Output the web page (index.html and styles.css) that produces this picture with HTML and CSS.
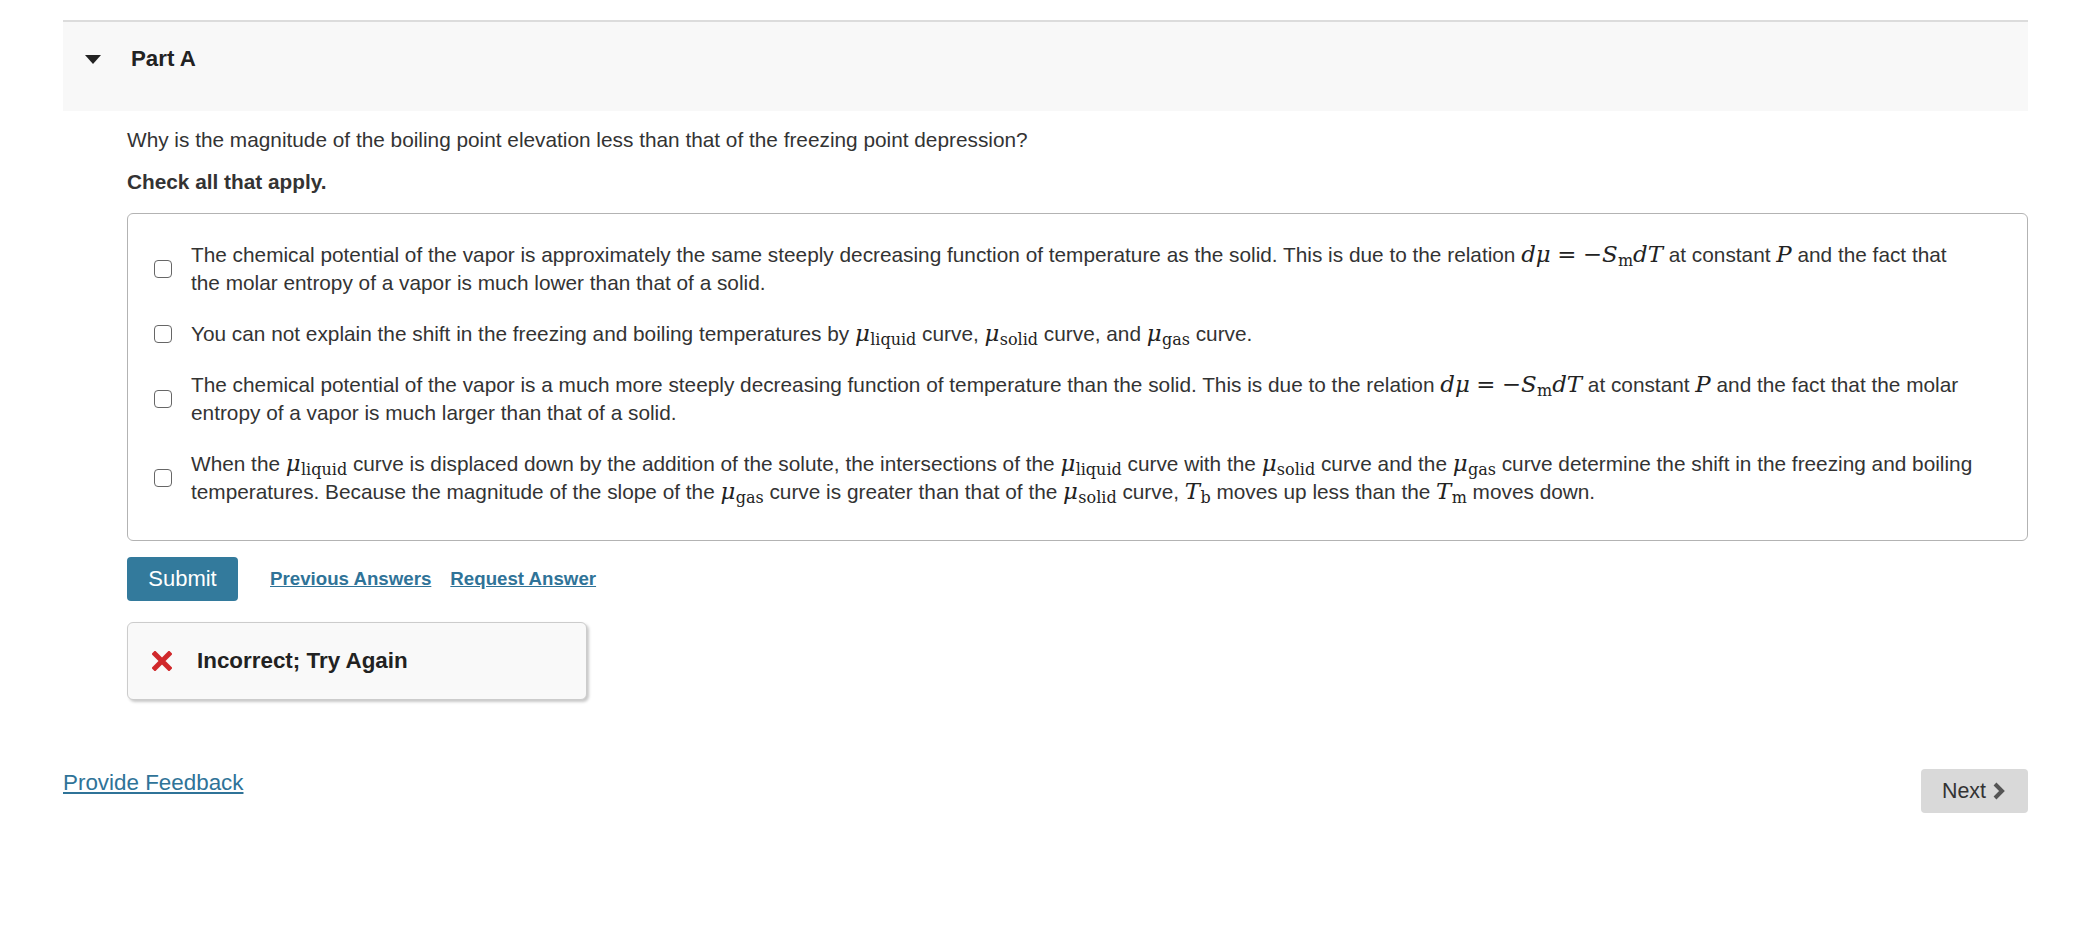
FILE: index.html
```html
<!DOCTYPE html>
<html lang="en">
<head>
<meta charset="utf-8">
<title>Part A</title>
<link rel="stylesheet" href="styles.css">
</head>
<body>
<div class="page">
  <section class="part">
    <header class="part-head">
      <span class="caret"></span>
      <h2 class="part-title">Part A</h2>
    </header>
    <div class="part-body">
      <p class="question">Why is the magnitude of the boiling point elevation less than that of the freezing point depression?</p>
      <p class="instr">Check all that apply.</p>

      <div class="options">
        <label class="option">
          <input type="checkbox" class="cb">
          <span class="opt-text">The chemical potential of the vapor is approximately the same steeply decreasing function of temperature as the solid. This is due to the relation <span class="m">d<span class="g">μ</span><span class="op">=</span><span class="un">−</span>S<sub>m</sub>dT</span> at constant <span class="m">P</span> and the fact that the molar entropy of a vapor is much lower than that of a solid.</span>
        </label>
        <label class="option">
          <input type="checkbox" class="cb">
          <span class="opt-text">You can not explain the shift in the freezing and boiling temperatures by <span class="m"><span class="g">μ</span><sub>liquid</sub></span> curve, <span class="m"><span class="g">μ</span><sub>solid</sub></span> curve, and <span class="m"><span class="g">μ</span><sub>gas</sub></span> curve.</span>
        </label>
        <label class="option">
          <input type="checkbox" class="cb">
          <span class="opt-text">The chemical potential of the vapor is a much more steeply decreasing function of temperature than the solid. This is due to the relation <span class="m">d<span class="g">μ</span><span class="op">=</span><span class="un">−</span>S<sub>m</sub>dT</span> at constant <span class="m">P</span> and the fact that the molar entropy of a vapor is much larger than that of a solid.</span>
        </label>
        <label class="option">
          <input type="checkbox" class="cb">
          <span class="opt-text">When the <span class="m"><span class="g">μ</span><sub>liquid</sub></span> curve is displaced down by the addition of the solute, the intersections of the <span class="m"><span class="g">μ</span><sub>liquid</sub></span> curve with the <span class="m"><span class="g">μ</span><sub>solid</sub></span> curve and the <span class="m"><span class="g">μ</span><sub>gas</sub></span> curve determine the shift in the freezing and boiling temperatures. Because the magnitude of the slope of the <span class="m"><span class="g">μ</span><sub>gas</sub></span> curve is greater than that of the <span class="m"><span class="g">μ</span><sub>solid</sub></span> curve, <span class="m">T<sub>b</sub></span> moves up less than the <span class="m">T<sub>m</sub></span> moves down.</span>
        </label>
      </div>

      <div class="actions">
        <button class="btn-submit" type="button">Submit</button>
        <a class="act-link" href="#">Previous Answers</a>
        <a class="act-link" href="#">Request Answer</a>
      </div>

      <div class="feedback">
        <svg class="x-icon" width="20" height="20" viewBox="0 0 20 20" aria-hidden="true">
          <path d="M3 3 L17 17 M17 3 L3 17" stroke="#d0282b" stroke-width="5" stroke-linecap="square" fill="none"/>
        </svg>
        <span class="fb-text">Incorrect; Try Again</span>
      </div>
    </div>
  </section>

  <footer class="foot">
    <a class="feedback-link" href="#">Provide Feedback</a>
    <button class="btn-next" type="button">Next
      <svg class="chev" width="14" height="18" viewBox="0 0 14 18" aria-hidden="true">
        <path d="M3 2 L10 9 L3 16" stroke="#555" stroke-width="4" fill="none" stroke-linejoin="miter"/>
      </svg>
    </button>
  </footer>
</div>
</body>
</html>
```
FILE: styles.css
```css
html, body {
  margin: 0;
  padding: 0;
  background: #ffffff;
}

body {
  font-family: "Liberation Sans", Arial, Helvetica, sans-serif;
  font-size: 20.8px;
  color: #333333;
}

.page {
  padding: 20px 66px 0 63px;
}

.part-head {
  display: flex;
  align-items: center;
  height: 89px;
  background: #f8f8f8;
  border-top: 2px solid #dcdcdc;
  padding-left: 22px;
  gap: 30px;
}

.caret {
  width: 0;
  height: 0;
  border-left: 8.5px solid transparent;
  border-right: 8.5px solid transparent;
  border-top: 9px solid #222;
  margin-top: -14px;
}

.part-title {
  margin: 0;
  font-size: 22.3px;
  font-weight: bold;
  color: #222;
  margin-top: -16px;
}

.part-body {
  padding-left: 64px;
}

.question {
  margin: 15px 0 0;
  line-height: 28px;
}

.instr {
  margin: 14px 0 0;
  line-height: 28px;
  font-weight: bold;
}

.options {
  margin-top: 17px;
  border: 1px solid #b3b3b3;
  border-radius: 6px;
  padding: 15px 49px 23px 26px;
}

.option {
  display: flex;
  align-items: center;
  padding: 11.5px 0;
  line-height: 28px;
}

.cb {
  appearance: none;
  -webkit-appearance: none;
  flex: none;
  width: 18px;
  height: 18px;
  margin: 0 19px 0 0;
  border: 1.5px solid #666;
  border-radius: 4px;
  background: #fff;
  box-sizing: border-box;
}

.opt-text {
  flex: 1;
}

.m {
  font-family: "DejaVu Serif", "Liberation Serif", serif;
  font-style: italic;
  font-size: 1.1em;
  line-height: 1;
  color: #222;
}

.m .op {
  font-style: normal;
  margin: 0 0.28em;
}

.m .un {
  font-style: normal;
}

.m sub {
  font-style: normal;
  font-size: 0.7em;
  line-height: 1;
  vertical-align: baseline;
  position: relative;
  top: 0.28em;
  margin-left: 0.02em;
}

.actions {
  display: flex;
  align-items: center;
  margin-top: 16px;
}

.btn-submit {
  width: 111px;
  height: 44px;
  background: #337a9c;
  color: #fff;
  border: none;
  border-radius: 4px;
  font-family: "Liberation Sans", Arial, sans-serif;
  font-size: 22px;
  padding: 0;
  margin-right: 32px;
}

.act-link {
  font-size: 18.7px;
  color: #2f7398;
  font-weight: bold;
  text-decoration: underline;
  margin-right: 19px;
}

.feedback {
  margin-top: 21px;
  width: 460px;
  height: 78px;
  box-sizing: border-box;
  display: flex;
  align-items: center;
  padding-left: 24px;
  gap: 25px;
  background: #f9f9f9;
  border: 1px solid #cccccc;
  border-radius: 6px;
  box-shadow: 2px 2px 3px rgba(0, 0, 0, 0.22);
}

.x-icon {
  flex: none;
}

.fb-text {
  font-size: 22.4px;
  font-weight: bold;
  color: #222;
}

.foot {
  display: flex;
  justify-content: space-between;
  align-items: flex-start;
  margin-top: 69px;
}

.feedback-link {
  font-size: 22.4px;
  color: #2f7398;
  text-decoration: underline;
  line-height: 28px;
}

.btn-next {
  display: flex;
  align-items: center;
  gap: 6px;
  width: 107px;
  height: 44px;
  padding: 0 0 0 21px;
  background: #d9d9d9;
  border: none;
  border-radius: 4px;
  color: #333;
  font-family: "Liberation Sans", Arial, sans-serif;
  font-size: 21.4px;
}
```
